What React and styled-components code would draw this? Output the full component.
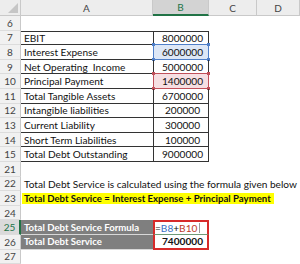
import React from "react";
import styled, { createGlobalStyle, css } from "styled-components";

const GlobalStyle = createGlobalStyle`
  html, body {
    margin: 0;
    padding: 0;
    background: #fff;
  }
  body {
    width: 300px;
    height: 264px;
    overflow: hidden;
    font-family: Lato, "Open Sans", sans-serif;
  }
`;

const green = "#217346";

//#region styled components
const Sheet = styled.div`
  display: grid;
  grid-template-columns: 21px 132px 56px 48px 1fr;
  grid-template-rows: 16px;
  grid-auto-rows: 14.6px;
  width: 300px;
  height: 264px;
  font-size: 10.1px;
  color: #111;
`;

const Corner = styled.div`
  position: relative;
  background: #ededed;
  border-right: 1px solid #c9c9c9;
  border-bottom: 1px solid #c9c9c9;
  box-sizing: border-box;
  &::after {
    content: "";
    position: absolute;
    right: 2px;
    bottom: 2px;
    border-left: 10px solid transparent;
    border-bottom: 10px solid #c6c6c6;
  }
`;

const ColHeader = styled.div`
  display: flex;
  align-items: center;
  justify-content: center;
  box-sizing: border-box;
  background: ${({ selected }) => (selected ? "#d3d3d3" : "#ededed")};
  color: ${({ selected }) => (selected ? green : "#444")};
  border-right: 1px solid #c9c9c9;
  border-bottom: ${({ selected }) =>
    selected ? `2px solid ${green}` : "1px solid #c9c9c9"};
  font-size: 10px;
`;

const RowHeader = styled.div`
  display: flex;
  align-items: center;
  justify-content: center;
  box-sizing: border-box;
  background: ${({ selected }) => (selected ? "#dadada" : "#f1f1f1")};
  color: ${({ selected }) => (selected ? green : "#444")};
  border-right: ${({ selected }) =>
    selected ? `2px solid ${green}` : "1px solid #c9c9c9"};
  border-bottom: 1px solid #dcdcdc;
  font-size: 10px;
`;

const Cell = styled.div`
  position: relative;
  display: flex;
  align-items: center;
  box-sizing: border-box;
  padding-left: 3px;
  white-space: pre;
  justify-content: ${({ center }) => (center ? "center" : "flex-start")};
  font-weight: ${({ bold }) => (bold ? 700 : 400)};
  font-size: ${({ bold }) => (bold ? "9.6px" : "inherit")};
  ${({ boxed, first, col }) =>
    boxed &&
    css`
      border-bottom: 1px solid #333;
      ${first && "border-top: 1px solid #333;"}
      ${col === "B" &&
      "border-left: 1px solid #333; border-right: 1px solid #333;"}
    `}
  ${({ fill }) =>
    fill &&
    css`
      background: #7f7f7f;
      color: #fff;
      border-bottom: 1px solid #d8d8d8;
    `}
`;

const Mark = styled.div`
  position: absolute;
  inset: -1px;
  border: 1px solid ${({ tone }) => tone};
  background: ${({ tint }) => tint};
  z-index: 0;
`;

const Handle = styled.span`
  position: absolute;
  width: 3px;
  height: 3px;
  background: ${({ tone }) => tone};
  ${({ v }) => (v === "top" ? "top: -2px;" : "bottom: -2px;")}
  ${({ h }) => (h === "left" ? "left: -2px;" : "right: -2px;")}
`;

const Value = styled.span`
  position: relative;
  z-index: 1;
`;

const Span = styled.div`
  grid-column: 2 / -1;
  display: flex;
  align-items: center;
  padding-left: 3px;
  white-space: nowrap;
  overflow: visible;
`;

const Highlight = styled.span`
  margin-left: -2px;
  padding: 0 3px 0 2px;
  background: #ffff00;
  font-weight: 700;
  font-size: 9.6px;
  line-height: 11px;
`;

const Result = styled(Cell)`
  border-left: 2px solid #d72a2a;
  border-right: 2px solid #d72a2a;
  font-size: 10.1px;
  ${({ top }) =>
    top
      ? css`
          border-top: 2px solid #d72a2a;
          border-bottom: 1px solid #6f9a78;
          padding-left: 0;
        `
      : css`
          border-bottom: 2px solid #d72a2a;
        `}
`;

const Ref = styled.span`
  color: ${({ tone }) => tone};
`;

const Caret = styled.span`
  display: inline-block;
  width: 1px;
  height: 10px;
  margin-left: 2px;
  background: #9a9a9a;
`;
//#endregion

const table = [
  [7, "EBIT", "8000000"],
  [8, "Interest Expense", "6000000", { tone: "#4f7fc8", tint: "#dde7f6" }],
  [9, "Net Operating  Income", "5000000"],
  [10, "Principal Payment", "1400000", { tone: "#c0505a", tint: "#f6dfe2" }],
  [11, "Total Tangible Assets", "6700000"],
  [12, "Intangible liabilities", "200000"],
  [13, "Current Liability", "300000"],
  [14, "Short Term Liabilities", "100000"],
  [15, "Total Debt Outstanding", "9000000"],
];

const EmptyRow = ({ n }) => (
  <>
    <RowHeader>{n}</RowHeader>
    <Cell />
    <Cell />
    <Cell />
    <Cell />
  </>
);

const App = () => (
  <>
    <GlobalStyle />
    <Sheet>
      <Corner />
      <ColHeader>A</ColHeader>
      <ColHeader selected>B</ColHeader>
      <ColHeader>C</ColHeader>
      <ColHeader>D</ColHeader>

      <EmptyRow n={6} />

      {table.map(([n, label, value, mark], i) => (
        <React.Fragment key={n}>
          <RowHeader>{n}</RowHeader>
          <Cell boxed first={i === 0} col="A">
            {label}
          </Cell>
          <Cell boxed first={i === 0} col="B" center>
            {mark && (
              <Mark tone={mark.tone} tint={mark.tint}>
                {["top", "bottom"].map((v) =>
                  ["left", "right"].map((h) => (
                    <Handle key={v + h} v={v} h={h} tone={mark.tone} />
                  ))
                )}
              </Mark>
            )}
            <Value>{value}</Value>
          </Cell>
          <Cell />
          <Cell />
        </React.Fragment>
      ))}

      <EmptyRow n={21} />

      <RowHeader>22</RowHeader>
      <Span>Total Debt Service is calculated using the formula given below</Span>

      <RowHeader>23</RowHeader>
      <Span>
        <Highlight>
          Total Debt Service = Interest Expense + Principal Payment
        </Highlight>
      </Span>

      <EmptyRow n={24} />

      <RowHeader selected>25</RowHeader>
      <Cell fill bold>
        Total Debt Service Formula
      </Cell>
      <Result top>
        =<Ref tone="#3a6fc4">B8</Ref>+<Ref tone="#c0392b">B10</Ref>
        <Caret />
      </Result>
      <Cell />
      <Cell />

      <RowHeader>26</RowHeader>
      <Cell fill bold>
        Total Debt Service
      </Cell>
      <Result center bold>
        7400000
      </Result>
      <Cell />
      <Cell />

      <EmptyRow n={27} />
    </Sheet>
  </>
);

export default App;
